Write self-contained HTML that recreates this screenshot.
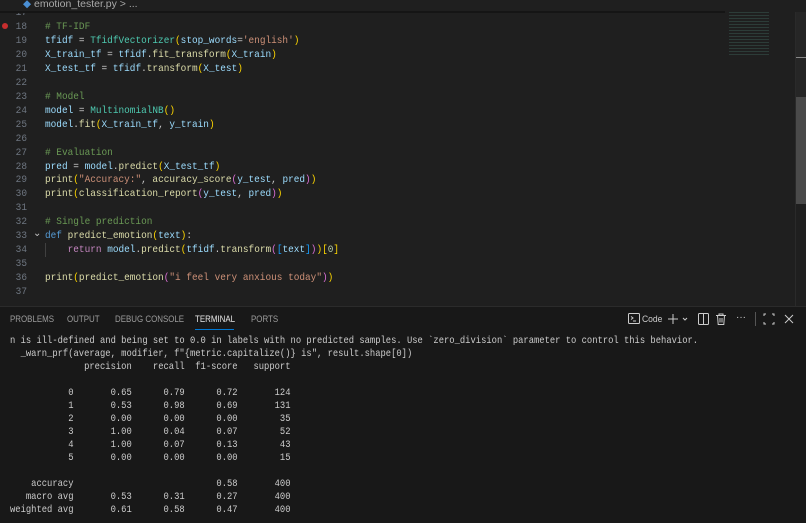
<!DOCTYPE html>
<html><head><meta charset="utf-8"><style>
*{margin:0;padding:0;box-sizing:border-box}
body{width:806px;height:523px;overflow:hidden;background:#1f1f1f;position:relative;font-family:"Liberation Mono",monospace}
.bc{position:absolute;left:0;top:0;width:806px;height:11px;background:#1f1f1f;font-family:"Liberation Sans",sans-serif;font-size:10.5px;color:#a9a9a9;line-height:9px;padding-left:23px;overflow:hidden;z-index:2}
.shadow{position:absolute;left:0;top:11px;width:725px;height:2px;background:#151515;z-index:2}
.ln{position:absolute;left:0;width:27px;text-align:right;color:#6e7681;font-size:10.5px;transform:scaleX(.9);transform-origin:right}
.cd{position:absolute;left:45px;font-size:10.5px;color:#cccccc;white-space:pre;transform:scaleX(.897);transform-origin:left}
.c{color:#6a9955}.v{color:#9cdcfe}.f{color:#dcdcaa}.t{color:#4ec9b0}.s{color:#ce9178}.k{color:#569cd6}.r{color:#c586c0}.y{color:#ffd700}.p{color:#da70d6}.b{color:#179fff}.n{color:#b5cea8}
.panel{position:absolute;left:0;top:306px;width:806px;height:217px;background:#181818;border-top:1px solid #2b2b2b}
.tab{position:absolute;top:7px;font-family:"Liberation Sans",sans-serif;font-size:9px;color:#9d9d9d;transform:scaleX(.88);transform-origin:left}
.term{position:absolute;left:10px;font-size:10.5px;color:#cccccc;white-space:pre;line-height:13px;transform:scaleX(.84);transform-origin:left}
.ic{position:absolute;top:5px}
</style></head><body>
<div class="bc"><span style="color:#4a8fd4">◆</span> emotion_tester.py &gt; ...</div>
<div class="shadow"></div>
<div style="position:absolute;left:2px;top:23px;width:6px;height:6px;border-radius:50%;background:#c72e2e"></div>
<div style="position:absolute;left:729px;top:12px;width:40px;height:44px;opacity:.5;background:repeating-linear-gradient(#3a5a50 0 1px,transparent 1px 3px)"></div>
<div style="position:absolute;left:795px;top:12px;width:11px;height:85px;background:#262626"></div>
<div style="position:absolute;left:795px;top:57px;width:11px;height:1px;background:#888"></div>
<div style="position:absolute;left:795px;top:97px;width:11px;height:107px;background:#4a4a4a"></div>
<div style="position:absolute;left:795px;top:12px;width:1px;height:294px;background:#2a2a2a"></div>
<div id="code"></div>
<script>
var L=[
[17,''],
[18,'<span class="c"># TF-IDF</span>'],
[19,'<span class="v">tfidf</span> = <span class="t">TfidfVectorizer</span><span class="y">(</span><span class="v">stop_words</span>=<span class="s">\'english\'</span><span class="y">)</span>'],
[20,'<span class="v">X_train_tf</span> = <span class="v">tfidf</span>.<span class="f">fit_transform</span><span class="y">(</span><span class="v">X_train</span><span class="y">)</span>'],
[21,'<span class="v">X_test_tf</span> = <span class="v">tfidf</span>.<span class="f">transform</span><span class="y">(</span><span class="v">X_test</span><span class="y">)</span>'],
[22,''],
[23,'<span class="c"># Model</span>'],
[24,'<span class="v">model</span> = <span class="t">MultinomialNB</span><span class="y">()</span>'],
[25,'<span class="v">model</span>.<span class="f">fit</span><span class="y">(</span><span class="v">X_train_tf</span>, <span class="v">y_train</span><span class="y">)</span>'],
[26,''],
[27,'<span class="c"># Evaluation</span>'],
[28,'<span class="v">pred</span> = <span class="v">model</span>.<span class="f">predict</span><span class="y">(</span><span class="v">X_test_tf</span><span class="y">)</span>'],
[29,'<span class="f">print</span><span class="y">(</span><span class="s">"Accuracy:"</span>, <span class="f">accuracy_score</span><span class="p">(</span><span class="v">y_test</span>, <span class="v">pred</span><span class="p">)</span><span class="y">)</span>'],
[30,'<span class="f">print</span><span class="y">(</span><span class="f">classification_report</span><span class="p">(</span><span class="v">y_test</span>, <span class="v">pred</span><span class="p">)</span><span class="y">)</span>'],
[31,''],
[32,'<span class="c"># Single prediction</span>'],
[33,'<span class="k">def</span> <span class="f">predict_emotion</span><span class="y">(</span><span class="v">text</span><span class="y">)</span>:'],
[34,'    <span class="r">return</span> <span class="v">model</span>.<span class="f">predict</span><span class="y">(</span><span class="v">tfidf</span>.<span class="f">transform</span><span class="p">(</span><span class="b">[</span><span class="v">text</span><span class="b">]</span><span class="p">)</span><span class="y">)[</span><span class="n">0</span><span class="y">]</span>'],
[35,''],
[36,'<span class="f">print</span><span class="y">(</span><span class="f">predict_emotion</span><span class="p">(</span><span class="s">"i feel very anxious today"</span><span class="p">)</span><span class="y">)</span>'],
[37,'']];
var h='';L.forEach(function(l,i){var t=26+(i-1)*13.95-5;h+='<div class="ln" style="top:'+t+'px">'+l[0]+'</div><div class="cd" style="top:'+t+'px">'+l[1]+'</div>';});
document.getElementById('code').innerHTML=h;
</script>
<div style="position:absolute;left:33px;top:228px;color:#c5c5c5;font-size:10px;font-family:'Liberation Sans',sans-serif">⌄</div>
<div style="position:absolute;left:45px;top:243px;width:1px;height:14px;background:#404040"></div>
<div class="panel">
<div class="tab" style="left:10px">PROBLEMS</div>
<div class="tab" style="left:67px">OUTPUT</div>
<div class="tab" style="left:115px">DEBUG CONSOLE</div>
<div class="tab" style="left:195px;color:#e7e7e7">TERMINAL</div>
<div style="position:absolute;left:195px;top:22px;width:39px;height:1px;background:#0078d4"></div>
<div class="tab" style="left:251px">PORTS</div>
<svg style="position:absolute;left:0;top:0" width="806" height="24" fill="none" stroke="#cccccc" stroke-width="1">
<rect x="628.5" y="6.5" width="11" height="10" rx="1"/><path d="M631 9.5l2 1.5-2 1.5M633 14h3"/>
<path d="M673 7v10M668 12h10M683 11l2 2 2-2"/>
<rect x="698.5" y="6.5" width="10" height="11" rx="1"/><path d="M703.5 6.5v11"/>
<path d="M716 8.5h10M719 8.5v-1.5h4v1.5M717.5 8.5l.7 9h5.6l.7-9M720 11v4.5M722 11v4.5"/>
<path d="M755.5 5v14" stroke="#555"/>
<path d="M764 9V7h2M772 7h2v2M774 15v2h-2M766 17h-2v-2"/>
<path d="M785 8l8 8M793 8l-8 8"/>
</svg>
<div style="position:absolute;left:642px;top:7px;font-family:'Liberation Sans',sans-serif;font-size:9.5px;color:#ccc;transform:scaleX(.9);transform-origin:left">Code</div>
<div style="position:absolute;left:736px;top:5px;font-family:'Liberation Sans',sans-serif;font-size:10px;color:#ccc">···</div>
<div class="term" style="top:28px">n is ill-defined and being set to 0.0 in labels with no predicted samples. Use `zero_division` parameter to control this behavior.
  _warn_prf(average, modifier, f"{metric.capitalize()} is", result.shape[0])
              precision    recall  f1-score   support

           0       0.65      0.79      0.72       124
           1       0.53      0.98      0.69       131
           2       0.00      0.00      0.00        35
           3       1.00      0.04      0.07        52
           4       1.00      0.07      0.13        43
           5       0.00      0.00      0.00        15

    accuracy                           0.58       400
   macro avg       0.53      0.31      0.27       400
weighted avg       0.61      0.58      0.47       400</div>
</div>
</body></html>
